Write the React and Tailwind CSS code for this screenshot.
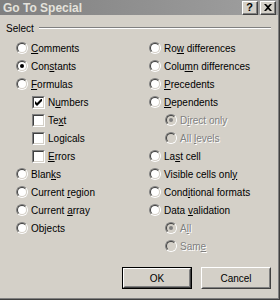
import React from 'react';

const disabledText = 'text-[#808080] [text-shadow:1px_1px_0_#ffffff]';

function Radio({ checked, disabled }) {
  return (
    <span className="relative w-3 h-3 shrink-0 rounded-full border border-t-[#808080] border-l-[#808080] border-b-white border-r-white">
      <span
        className={`absolute inset-0 rounded-full border border-t-[#404040] border-l-[#404040] border-b-[#d4d0c8] border-r-[#d4d0c8] flex items-center justify-center ${
          disabled ? 'bg-[#d4d0c8]' : 'bg-white'
        }`}
      >
        {checked && (
          <span className={`w-1 h-1 rounded-full ${disabled ? 'bg-[#808080]' : 'bg-black'}`} />
        )}
      </span>
    </span>
  );
}

function Checkbox({ checked }) {
  return (
    <span className="w-[13px] h-[13px] shrink-0 border border-t-[#808080] border-l-[#808080] border-b-white border-r-white">
      <span className="w-full h-full flex items-center justify-center bg-white border border-t-[#404040] border-l-[#404040] border-b-[#d4d0c8] border-r-[#d4d0c8]">
        {checked && (
          <svg width="7" height="7" viewBox="0 0 7 7">
            <polygon points="0,2 2,4 7,-1 7,2 2,7 0,5" fill="#000" />
          </svg>
        )}
      </span>
    </span>
  );
}

// label text with the access key underlined
function Label({ text, hot, disabled }) {
  const i = hot ?? -1;
  return (
    <span className={`whitespace-nowrap ${disabled ? disabledText : ''}`}>
      {i < 0 ? text : (
        <>
          {text.slice(0, i)}
          <u>{text[i]}</u>
          {text.slice(i + 1)}
        </>
      )}
    </span>
  );
}

function Row({ type = 'radio', text, hot, checked, disabled, indent = 0 }) {
  return (
    <div className="h-[18px] flex items-center" style={{ paddingLeft: indent }}>
      {type === 'radio' ? <Radio checked={checked} disabled={disabled} /> : <Checkbox checked={checked} />}
      <span className="ml-[3px]">
        <Label text={text} hot={hot} disabled={disabled} />
      </span>
    </div>
  );
}

function Button({ children, isDefault }) {
  return (
    <div className={`w-[70px] h-[22px] ${isDefault ? 'border border-black' : ''}`}>
      <div className="w-full h-full border border-t-white border-l-white border-b-[#404040] border-r-[#404040]">
        <div className="w-full h-full flex items-center justify-center border border-t-[#d4d0c8] border-l-[#d4d0c8] border-b-[#808080] border-r-[#808080]">
          {children}
        </div>
      </div>
    </div>
  );
}

function TitleButton({ children }) {
  return (
    <div className="w-[16px] h-[14px] bg-[#d4d0c8] border border-t-white border-l-white border-b-[#404040] border-r-[#404040]">
      <div className="w-full h-full flex items-center justify-center border-b border-r border-[#808080] font-bold text-[11px] leading-none text-black">
        {children}
      </div>
    </div>
  );
}

const left = [
  { text: 'Comments', hot: 0 },
  { text: 'Constants', hot: 3, checked: true },
  { text: 'Formulas', hot: 0 },
  { type: 'check', text: 'Numbers', hot: 1, checked: true, indent: 16 },
  { type: 'check', text: 'Text', hot: 2, indent: 16 },
  { type: 'check', text: 'Logicals', hot: 2, indent: 16 },
  { type: 'check', text: 'Errors', hot: 0, indent: 16 },
  { text: 'Blanks', hot: 4 },
  { text: 'Current region', hot: 8 },
  { text: 'Current array', hot: 8 },
  { text: 'Objects', hot: 2 },
];

const right = [
  { text: 'Row differences', hot: 2 },
  { text: 'Column differences', hot: 4 },
  { text: 'Precedents', hot: 0 },
  { text: 'Dependents', hot: 0 },
  { text: 'Direct only', hot: 1, checked: true, disabled: true, indent: 16 },
  { text: 'All levels', hot: 4, disabled: true, indent: 16 },
  { text: 'Last cell', hot: 2 },
  { text: 'Visible cells only', hot: 17 },
  { text: 'Conditional formats', hot: 4 },
  { text: 'Data validation', hot: 5 },
  { text: 'All', hot: 1, checked: true, disabled: true, indent: 16 },
  { text: 'Same', hot: 3, disabled: true, indent: 16 },
];

export default function App() {
  return (
    <div className="w-[280px] h-[300px] bg-[#d4d0c8] border-r border-b border-[#404040] font-['Liberation_Sans',Arial,sans-serif] text-[10px] text-black overflow-hidden">
      <div className="h-full flex flex-col border-r border-b border-[#808080]">
        {/* Title bar */}
        <div className="h-[15px] shrink-0 flex items-center justify-between pl-[3px] pr-[2px] bg-gradient-to-r from-[#808080] to-[#a0a0a0]">
          <span className="font-bold text-[12px] text-[#e4e2dc]">Go To Special</span>
          <div className="flex gap-[2px]">
            <TitleButton>?</TitleButton>
            <TitleButton>
              <svg width="8" height="7" viewBox="0 0 8 7">
                <path d="M0 0h2l2 2 2-2h2L5 3.5 8 7H6L4 5 2 7H0l3-3.5z" fill="#000" />
              </svg>
            </TitleButton>
          </div>
        </div>

        {/* Select group header */}
        <div className="mt-[6px] h-[14px] flex items-center pl-[6px]">
          <span>Select</span>
          <div className="flex-1 ml-[5px] mr-[7px] border-t border-b border-t-[#808080] border-b-white" />
        </div>

        {/* Options */}
        <div className="mt-[4px] flex">
          <div className="w-[149px] pl-[16px]">
            {left.map((r) => (
              <Row key={r.text} {...r} />
            ))}
          </div>
          <div className="flex-1">
            {right.map((r) => (
              <Row key={r.text} {...r} />
            ))}
          </div>
        </div>

        {/* Buttons */}
        <div className="mt-[12px] flex justify-end gap-[9px] pr-[7px]">
          <Button isDefault>OK</Button>
          <Button>Cancel</Button>
        </div>
      </div>
    </div>
  );
}
